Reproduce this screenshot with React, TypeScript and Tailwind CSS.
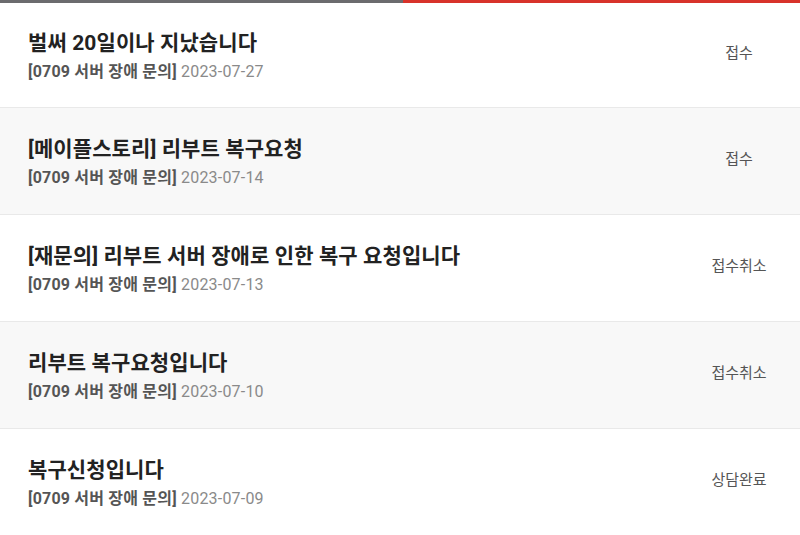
const items = [
  { title: '벌써 20일이나 지났습니다', date: '2023-07-27', status: '접수' },
  { title: '[메이플스토리] 리부트 복구요청', date: '2023-07-14', status: '접수' },
  { title: '[재문의] 리부트 서버 장애로 인한 복구 요청입니다', date: '2023-07-13', status: '접수취소' },
  { title: '리부트 복구요청입니다', date: '2023-07-10', status: '접수취소' },
  { title: '복구신청입니다', date: '2023-07-09', status: '상담완료' },
];

export default function App() {
  return (
    <div
      className="w-[800px] h-[535px] overflow-hidden bg-white flex flex-col"
      style={{ fontFamily: 'Roboto, "Noto Sans CJK KR", sans-serif' }}
    >
      {/* progress bar */}
      <div className="flex h-[3px] shrink-0">
        <div className="w-[403px] bg-[#6b6b6e]"></div>
        <div className="flex-1 bg-[#d8322a]"></div>
      </div>

      {items.map((item, i) => (
        <div
          key={i}
          className={`flex items-center shrink-0 border-b border-[#e9e9e9] ${
            i === 0 ? 'h-[105px]' : 'h-[107px]'
          } ${i % 2 === 1 ? 'bg-[#f8f8f8]' : 'bg-white'}`}
        >
          <div className="flex-1 min-w-0 pl-[28px]">
            <div className="text-[21px] font-bold text-[#222222] leading-[28px] tracking-[0.1px] truncate">
              {item.title}
            </div>
            <div className="mt-[5px] text-[16px] leading-[20px] tracking-[0.2px]">
              <span className="font-bold text-[#555555]">[0709 서버 장애 문의]</span>{' '}
              <span className="text-[#8a8a8a]">{item.date}</span>
            </div>
          </div>
          <div className="w-[90px] mr-[16px] text-center text-[15px] text-[#555555] mb-[4px]">
            {item.status}
          </div>
        </div>
      ))}
    </div>
  );
}
